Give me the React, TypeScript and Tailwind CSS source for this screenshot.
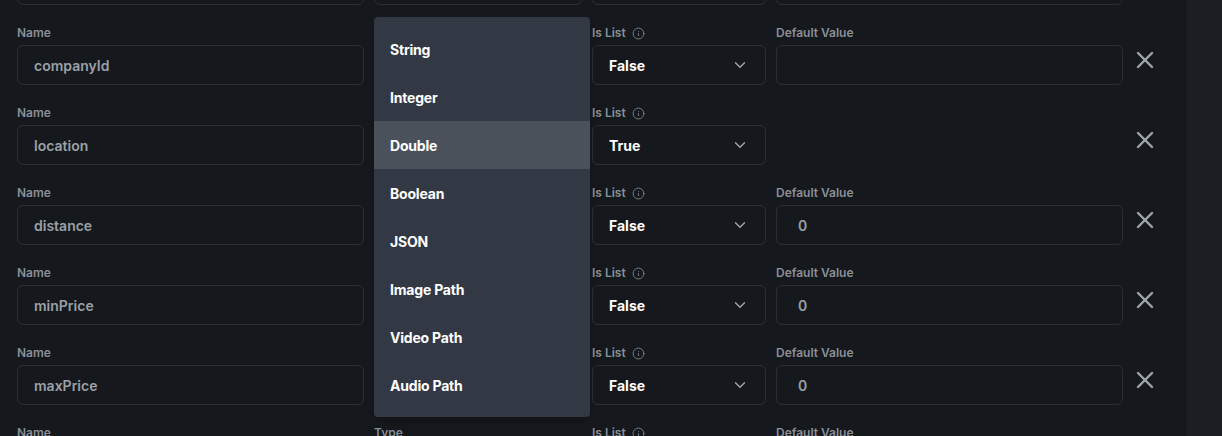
import React from "react";
import { X, ChevronDown, Info } from "lucide-react";

type Row = { name: string; type: string; isList: string; def?: string | null };

const rows: Row[] = [
  { name: "companyName", type: "String", isList: "False", def: "" },
  { name: "companyId", type: "String", isList: "False", def: "" },
  { name: "location", type: "Double", isList: "True", def: null },
  { name: "distance", type: "Double", isList: "False", def: "0" },
  { name: "minPrice", type: "Double", isList: "False", def: "0" },
  { name: "maxPrice", type: "Double", isList: "False", def: "0" },
  { name: "rating", type: "Double", isList: "False", def: "0" },
];

const options = ["String", "Integer", "Double", "Boolean", "JSON", "Image Path", "Video Path", "Audio Path"];

function Label({ children }: { children: React.ReactNode }) {
  return <div className="h-4 mb-1 text-[12px] leading-4 font-semibold text-[#8a8f98] flex items-center gap-1">{children}</div>;
}

function FieldRow({ r, first }: { r: Row; first?: boolean }) {
  return (
    <div className={`flex gap-[10px] ${first ? "-mt-[80px]" : ""}`}>
      <div className="w-[347px]">
        <Label>Name</Label>
        <div className="h-10 rounded-[6px] border border-[#2a2f37] flex items-center px-4 text-[14px] font-semibold text-[#9ba0a8]">
          {r.name}
        </div>
      </div>
      <div className="w-[208px]">
        <Label>Type</Label>
        <div className="h-10 rounded-[6px] border border-[#2a2f37] flex items-center justify-between px-4 text-[14px] font-bold text-white">
          {r.type}
          <ChevronDown size={18} className="text-[#9ba0a8]" />
        </div>
      </div>
      <div className="w-[174px]">
        <Label>
          Is List <Info size={13} strokeWidth={1.6} className="text-[#878c95] ml-[2px]" />
        </Label>
        <div className="h-10 rounded-[6px] border border-[#2a2f37] flex items-center justify-between pl-4 pr-4 text-[14px] font-bold text-white">
          {r.isList}
          <ChevronDown size={18} strokeWidth={1.8} className="text-[#a3a8b0]" />
        </div>
      </div>
      <div className="w-[347px]">
        {r.def !== null && r.def !== undefined ? (
          <>
            <Label>Default Value</Label>
            <div className="h-10 rounded-[6px] border border-[#2a2f37] flex items-center px-[21px] text-[14px] font-semibold text-[#9ba0a8]">
              {r.def}
            </div>
          </>
        ) : null}
      </div>
      <div className="pt-[21px] -ml-[2px]">
        <X size={28} strokeWidth={2.1} className="text-[#a0a5ad]" />
      </div>
    </div>
  );
}

export default function App() {
  return (
    <div
      className="w-[1222px] h-[436px] overflow-hidden bg-[#15181c] flex"
      style={{ fontFamily: "Inter, 'Noto Sans', sans-serif" }}
    >
      <div className="relative flex-1 pl-[17px] pt-[25px] flex flex-col gap-5">
        {rows.map((r, i) => (
          <FieldRow key={i} r={r} first={i === 0} />
        ))}
        <div className="absolute left-[374px] top-[17px] w-[216px] py-2 rounded-[4px] bg-[#323945] shadow-lg">
          {options.map((o) => (
            <div
              key={o}
              className={`h-12 flex items-center px-4 text-[14px] font-bold tracking-[-0.2px] text-white ${o === "Double" ? "bg-[#4a515b]" : ""}`}
            >
              {o}
            </div>
          ))}
        </div>
      </div>
      <div className="w-[35px] bg-[#1b1e22]" />
    </div>
  );
}
